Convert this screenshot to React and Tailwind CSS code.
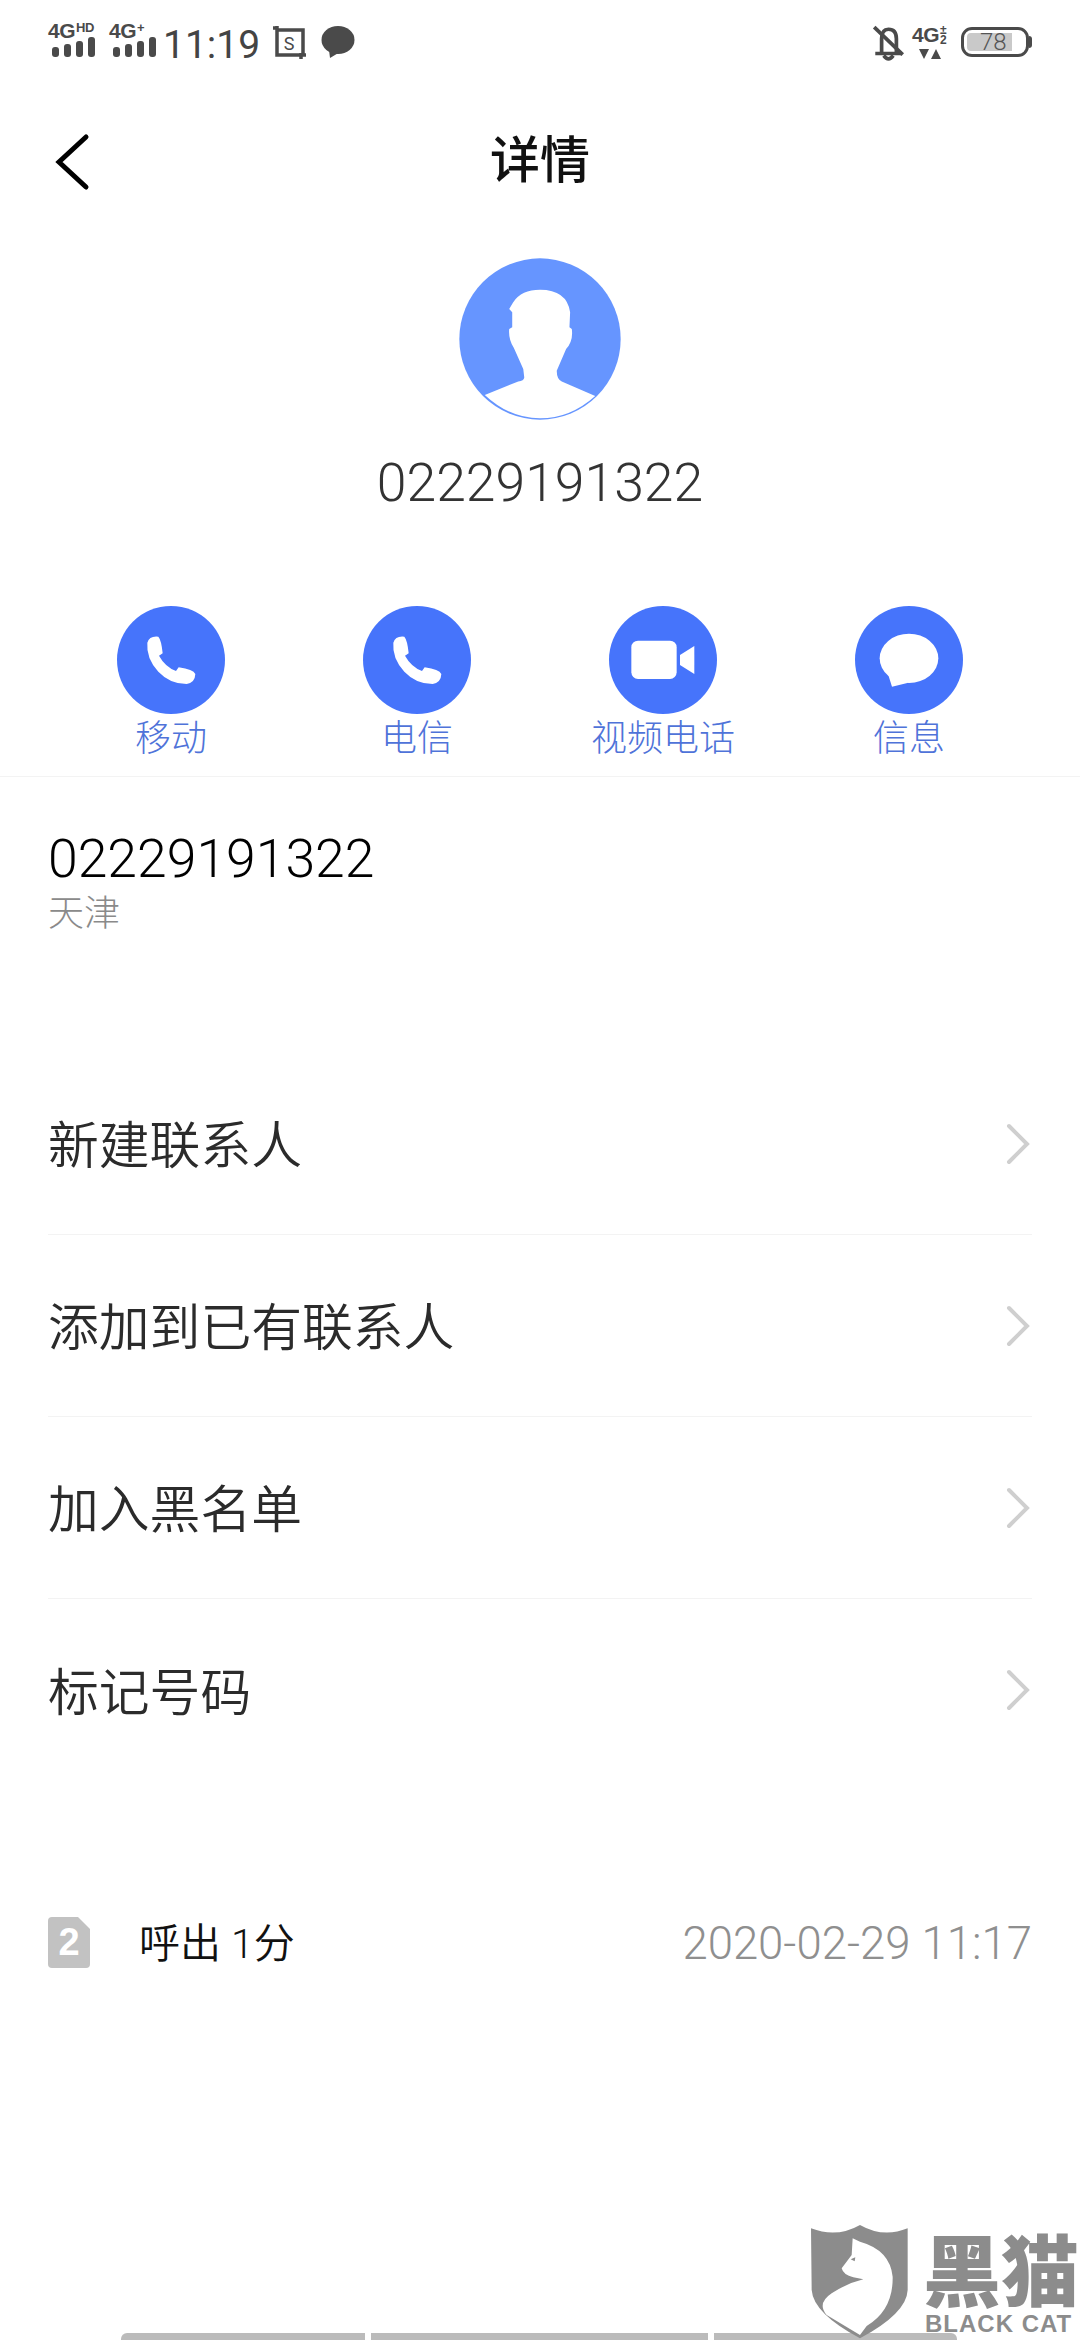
const CJK = "font-['Roboto','Noto_Sans_CJK_SC',sans-serif]";

function Signal() {
  return (
    <div className="flex items-end gap-[5px] h-[20px] ml-[4px]">
      <div className="w-[7px] h-[10px] rounded-[3px] bg-[#4a4a4a]" />
      <div className="w-[7px] h-[13px] rounded-[3px] bg-[#4a4a4a]" />
      <div className="w-[7px] h-[16px] rounded-[3px] bg-[#4a4a4a]" />
      <div className="w-[7px] h-[20px] rounded-[3px] bg-[#4a4a4a]" />
    </div>
  );
}

function Net({ sup }) {
  return (
    <div className="flex flex-col w-[50px]">
      <div className="flex items-start h-[16px] leading-[19px] text-[#4a4a4a] font-bold font-['Liberation_Sans',sans-serif]">
        <span className="text-[21px] leading-[19px] tracking-[-0.5px]">4G</span>
        <span className="text-[13px] leading-[13px] ml-[1px] tracking-[-0.5px]">{sup}</span>
      </div>
      <Signal />
    </div>
  );
}

function StatusBar() {
  return (
    <div className="h-[80px] pl-[48px] pr-[48px] flex justify-between items-start">
      <div className="flex items-start pt-[21px]">
        <Net sup="HD" />
        <div className="ml-[11px]"><Net sup="+" /></div>
        <span className="ml-[4px] mt-[5px] text-[39px] leading-[38px] font-normal text-[#444] font-['Roboto',sans-serif]">11:19</span>
        <svg className="ml-[12px] mt-[5px]" width="34" height="34" viewBox="0 0 34 34">
          <path d="M1 2h5M5 0v5M5 4h26v25M5 4v25h29M29 27v6" fill="none" stroke="#4a4a4a" strokeWidth="3.5" />
          <text x="17" y="24" textAnchor="middle" fontSize="18" fill="#4a4a4a" fontFamily="Roboto">S</text>
        </svg>
        <svg className="ml-[15px] mt-[5px]" width="34" height="33" viewBox="0 0 34 33">
          <ellipse cx="17" cy="14" rx="16.5" ry="14" fill="#4a4a4a" />
          <path d="M8 24 L9 32 L19 26Z" fill="#4a4a4a" />
        </svg>
      </div>
      <div className="flex items-start pt-[25px]">
        <svg width="34" height="38" viewBox="0 0 32 36">
          <path d="M9 26V13Q9 4 15.5 4Q23 4 23 13V26M3 27H28M11 29Q15.5 35 20 29" fill="none" stroke="#4a4a4a" strokeWidth="3.5" />
          <path d="M2 2L29 28" stroke="#4a4a4a" strokeWidth="3.5" />
        </svg>
        <div className="ml-[6px] w-[37px] flex flex-col items-start">
          <div className="flex font-bold text-[#4a4a4a] font-['Liberation_Sans',sans-serif] h-[19px]">
            <span className="text-[21px] leading-[19px] tracking-[-0.5px]">4G</span>
            <span className="text-[12px] leading-[10px] ml-[1px] text-center">±<br />2</span>
          </div>
          <svg className="ml-[7px] mt-[5px]" width="22" height="11" viewBox="0 0 22 11">
            <path d="M0 0H10L5 10ZM12 10H22L17 0Z" fill="#4a4a4a" />
          </svg>
        </div>
        <div className="ml-[12px] mt-[2px] flex items-center">
          <div className="relative w-[68px] h-[30px] rounded-[11px] border-[3px] border-[#4a4a4a] p-[3px]">
            <div className="w-[45px] h-full bg-[#c9c9c9] rounded-l-[4px]" />
            <span className="absolute left-[16px] top-[-1px] text-[24px] leading-[26px] font-light text-[#555] font-['Roboto',sans-serif]">78</span>
          </div>
          <div className="w-[3px] h-[12px] bg-[#4a4a4a] rounded-r-[3px]" />
        </div>
      </div>
    </div>
  );
}

function PhoneIcon() {
  return (
    <svg width="108" height="108" viewBox="81 48 324 324">
      <circle cx="243" cy="210" r="162" fill="#4674fb" />
      <path d="M172 158Q178 137 205 140Q214 150 218 190L207 197Q225 230 258 243L266 232Q310 238 316 252Q315 278 290 282Q240 282 205 245Q168 205 172 158Z" fill="#fff" />
    </svg>
  );
}
function VideoIcon() {
  return (
    <svg width="108" height="108" viewBox="147 48 324 324">
      <circle cx="309" cy="210" r="162" fill="#4674fb" />
      <rect x="214" y="152" width="136" height="115" rx="20" fill="#fff" />
      <path d="M360 195L403 168V252L360 225Z" fill="#fff" />
    </svg>
  );
}
function MsgIcon() {
  return (
    <svg width="108" height="108" viewBox="885 48 324 324">
      <circle cx="1047" cy="210" r="162" fill="#4674fb" />
      <ellipse cx="1047" cy="205" rx="88" ry="74" fill="#fff" />
      <path d="M985 255L996 290L1045 278Z" fill="#fff" />
    </svg>
  );
}

function Action({ icon, label }) {
  return (
    <div className="flex flex-col items-center">
      {icon}
      <span className="h-[48px] leading-[50px] text-[36px] font-light text-[#4f73d9] whitespace-nowrap">{label}</span>
    </div>
  );
}

function Row({ label, last }) {
  return (
    <div className={"h-[182px] flex items-center justify-between " + (last ? "" : "border-b border-[#f3f3f3]")}>
      <span className="pt-[8px] text-[50.8px] font-[350] text-[#2b2b2b]">{label}</span>
      <svg className="mr-[2px]" width="24" height="42" viewBox="0 0 24 42">
        <path d="M3 3L21 21L3 39" fill="none" stroke="#cfcfcf" strokeWidth="4" strokeLinecap="round" />
      </svg>
    </div>
  );
}

function Watermark() {
  return (
    <div className="absolute left-[811px] top-[2225px] w-[269px] h-[115px] flex">
      <svg width="97" height="114" viewBox="153 75 291 342">
        <path d="M153 85Q230 115 300 75Q370 115 443 85V270Q440 340 300 415Q160 340 155 270Z" fill="#8c8c8c" />
        <path d="M278 115L300 125Q390 150 398 230Q400 330 320 378L300 405L200 345Q170 310 215 280Q260 250 310 238L280 232Q250 225 245 205L275 165Z" fill="#fff" />
        <path d="M272 178L286 172L284 184Z" fill="#8c8c8c" />
      </svg>
      <div className="ml-[15px] flex flex-col items-start">
        <span className="mt-[6px] h-[72px] text-[78px] leading-[72px] font-black text-[#8c8c8c] whitespace-nowrap font-['Noto_Sans_CJK_SC',sans-serif]">黑猫</span>
        <span className="ml-[2px] mt-[9px] text-[24px] leading-[24px] font-bold tracking-[1px] text-[#8c8c8c] whitespace-nowrap font-['Liberation_Sans',sans-serif]">BLACK CAT</span>
      </div>
    </div>
  );
}

export default function App() {
  return (
    <div className={"relative w-[1080px] h-[2340px] overflow-hidden bg-white flex flex-col " + CJK}>
      <StatusBar />
      <div className="relative h-[160px] flex items-center justify-center">
        <svg className="absolute left-[54px] top-[52px]" width="38" height="60" viewBox="0 0 38 60">
          <path d="M32 5L5 30L32 55" fill="none" stroke="#000" strokeWidth="5" strokeLinecap="round" strokeLinejoin="miter" />
        </svg>
        <span className="pt-[2px] text-[50px] font-medium text-[#111]">详情</span>
      </div>
      <div className="mt-[18px] h-[161px] flex justify-center">
        <svg width="162" height="162" viewBox="358 83 484 484">
          <circle cx="600" cy="325" r="241" fill="#6695ff" />
          <path d="M600 178Q545 178 520 215L508 235L517 245V290L508 295Q505 325 522 352L550 415L553 440Q552 450 535 452L435 492Q510 562 600 562Q690 562 765 495L665 452Q650 445 650 420L678 355Q700 330 695 295L688 290L690 245Q680 178 600 178Z" fill="#fff" />
        </svg>
      </div>
      <div className="mt-[26px] h-[76px] leading-[76px] text-center text-[53.5px] font-light text-[#333]">02229191322</div>
      <div className="mt-[85px] px-[48px] grid grid-cols-4 pb-[14px] border-b border-[#f3f3f3]">
        <Action icon={<PhoneIcon />} label="移动" />
        <Action icon={<PhoneIcon />} label="电信" />
        <Action icon={<VideoIcon />} label="视频电话" />
        <Action icon={<MsgIcon />} label="信息" />
      </div>
      <div className="mt-[47px] px-[48px] h-[70px] leading-[70px] text-[53.5px] font-light text-black">02229191322</div>
      <div className="px-[48px] h-[38px] leading-[40px] text-[36px] font-light text-[#8a8a8a]">天津</div>
      <div className="mt-[121px] mx-[48px] flex flex-col">
        <Row label="新建联系人" />
        <Row label="添加到已有联系人" />
        <Row label="加入黑名单" />
        <Row label="标记号码" last />
      </div>
      <div className="mt-[131px] mx-[48px] h-[60px] flex items-center justify-between">
        <div className="flex items-center">
          <div className="relative w-[42px] h-[51px]">
            <svg className="absolute inset-0" width="42" height="51" viewBox="0 0 42 51">
              <path d="M4 0H30L42 12V47Q42 51 38 51H4Q0 51 0 47V4Q0 0 4 0Z" fill="#c2c2c2" />
            </svg>
            <span className="absolute inset-0 text-center text-[38px] leading-[51px] font-bold text-white font-['Liberation_Sans',sans-serif]">2</span>
          </div>
          <span className="ml-[49px] pt-[5px] text-[41px] font-[350] text-[#111] whitespace-pre">呼出 1分</span>
        </div>
        <span className="pt-[5px] text-[45.5px] font-light text-[#8f8f8f]">2020-02-29 11:17</span>
      </div>
      <div className="mt-auto pl-[121px] flex gap-[6px] h-[7px]">
        <div className="w-[244px] bg-[#bbb] rounded-tl-[6px]" />
        <div className="w-[337px] bg-[#bbb]" />
        <div className="w-[243px] bg-[#bbb] rounded-tr-[6px]" />
      </div>
      <Watermark />
    </div>
  );
}
